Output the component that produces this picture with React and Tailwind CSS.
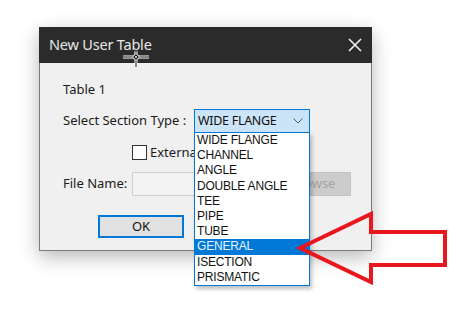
import React from "react";

const sectionTypes = [
  "WIDE FLANGE",
  "CHANNEL",
  "ANGLE",
  "DOUBLE ANGLE",
  "TEE",
  "PIPE",
  "TUBE",
  "GENERAL",
  "ISECTION",
  "PRISMATIC",
];

function MoveCursor() {
  return (
    <svg width="28" height="20" viewBox="0 0 28 20" className="absolute left-[122px] top-[48px]">
      <path d="M1 9h26M14 3v16" stroke="#fff" strokeWidth="3" />
      <path d="M1 9h26M14 3v16" stroke="#111" strokeWidth="1" />
      <path d="M14 5.5l3.5 3.5-3.5 3.5-3.5-3.5z" fill="#111" stroke="#fff" strokeWidth="1" />
      <circle cx="14" cy="9" r="1" fill="#fff" />
    </svg>
  );
}

function RedArrow() {
  return (
    <svg width="474" height="323" className="absolute left-0 top-0 pointer-events-none">
      <polygon
        points="300,248 371,214 371,232 445,232 445,265 371,265 371,282"
        fill="none"
        stroke="#e8161d"
        strokeWidth="4"
        strokeLinejoin="miter"
      />
    </svg>
  );
}

export default function App() {
  return (
    <div
      className="relative w-[474px] h-[323px] bg-white overflow-hidden pt-[27px] pl-[39px]"
      style={{ fontFamily: '"Noto Sans", "Open Sans", sans-serif' }}
    >
      {/* dialog */}
      <div className="w-[333px] h-[224px] bg-[#f0f0f0] border border-[#7b7b7b] shadow-[0_6px_18px_rgba(0,0,0,0.28)] flex flex-col">
        <div className="h-[36px] bg-[#2b2b2b] flex items-center justify-between pl-[10px] pr-[10px] -mx-px -mt-px">
          <span className="text-[14.5px] text-[#e8e8e8] tracking-[-0.2px]">New User Table</span>
          <svg width="14" height="14" viewBox="0 0 14 14">
            <path d="M1 1l12 12M13 1L1 13" stroke="#f2f2f2" strokeWidth="1.6" />
          </svg>
        </div>

        <div className="flex flex-col pl-[23px] text-[13px] text-[#1a1a1a]">
          <div className="h-[20px] mt-[17px] flex items-center">Table 1</div>

          <div className="mt-[9px] flex items-center h-[24px]">
            <span className="w-[131px] shrink-0">Select Section Type :</span>
            <div className="w-[116px] h-[24px] shrink-0 bg-[#cce4f7] border border-[#0078d7] flex items-center justify-between pl-[3px] pr-[6px] text-[12.5px] text-[#111]">
              <span className="tracking-[-0.3px]">WIDE FLANGE</span>
              <svg width="10" height="6" viewBox="0 0 10 6">
                <path d="M0.5 0.5l4.5 4.5 4.5-4.5" fill="none" stroke="#555" strokeWidth="1" />
              </svg>
            </div>
          </div>

          <div className="mt-[12px] flex items-center h-[15px] pl-[69px]">
            <span className="w-[15px] h-[15px] shrink-0 border border-[#333] bg-white" />
            <span className="ml-[3px]">External</span>
          </div>

          <div className="mt-[12px] flex items-center h-[24px]">
            <span className="w-[69px] shrink-0">File Name:</span>
            <div className="w-[136px] h-[24px] shrink-0 bg-[#f3f3f3] border border-[#cfcfcf]" />
            <div className="ml-[7px] w-[76px] h-[24px] shrink-0 bg-[#cccccc] border border-[#c3c3c3] flex items-center justify-center text-[#a3a3a3]">
              Browse
            </div>
          </div>

          <div className="mt-[19px] pl-[35px]">
            <div className="w-[86px] h-[23px] bg-[#e1e1e1] border-2 border-[#0078d7] flex items-center justify-center text-[#111]">
              OK
            </div>
          </div>
        </div>
      </div>

      {/* opened dropdown list */}
      <div
        className="absolute left-[194px] top-[132px] w-[116px] bg-white border border-[#0078d7] shadow-[2px_3px_4px_rgba(0,0,0,0.25)] text-[12px] text-[#111] flex flex-col"
        style={{ fontFamily: '"Liberation Sans", Arial, sans-serif' }}
      >
        {sectionTypes.map((t) => (
          <div
            key={t}
            className={`h-[15.2px] leading-[15px] pl-[2px] tracking-[-0.2px] ${
              t === "GENERAL" ? "bg-[#0078d7] text-[#eaf4ff]" : ""
            }`}
          >
            {t}
          </div>
        ))}
      </div>

      <MoveCursor />
      <RedArrow />
    </div>
  );
}
